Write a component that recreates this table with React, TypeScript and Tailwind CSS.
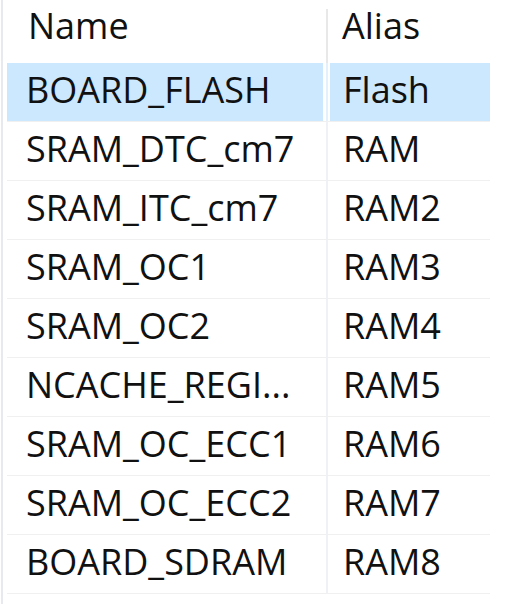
const rows = [
  { name: "BOARD_FLASH", alias: "Flash", selected: true },
  { name: "SRAM_DTC_cm7", alias: "RAM" },
  { name: "SRAM_ITC_cm7", alias: "RAM2" },
  { name: "SRAM_OC1", alias: "RAM3" },
  { name: "SRAM_OC2", alias: "RAM4" },
  { name: "NCACHE_REGI...", alias: "RAM5" },
  { name: "SRAM_OC_ECC1", alias: "RAM6" },
  { name: "SRAM_OC_ECC2", alias: "RAM7" },
  { name: "BOARD_SDRAM", alias: "RAM8" },
];

const App = () => {
  return (
    <div className="w-[508px] h-[604px] bg-white overflow-hidden flex font-['Open_Sans',sans-serif] text-[36px] font-medium text-[#111]">
      {/* left edge of the pane */}
      <div className="ml-[1px] w-[2px] h-full bg-[#e6e9ef]" />

      <div className="ml-[4px] flex flex-col">
        {/* header */}
        <div className="flex h-[63px]">
          <div className="w-[316px] pl-[21px] pt-[2px] leading-[48px]">Name</div>
          <div className="w-[7px] flex justify-center pt-[9px]">
            <div className="w-[2px] h-full bg-[#e8e8e8]" />
          </div>
          <div className="w-[160px] pl-[12px] pt-[2px] leading-[48px]">Alias</div>
        </div>

        {rows.map((row) => (
          <div key={row.name} className="flex h-[59px] border-b border-[#f0f0f0]">
            <div className={`w-[316px] pl-[19px] pb-[4px] flex items-center ${row.selected ? "bg-[#cce8ff]" : ""}`}>
              {row.name}
            </div>
            <div className="w-[7px] flex justify-center">
              <div className={`w-[2px] h-full ${row.selected ? "bg-[#e3f1fc]" : "bg-[#eef1f6]"}`} />
            </div>
            <div className={`w-[160px] pl-[13px] pb-[4px] flex items-center ${row.selected ? "bg-[#cce8ff]" : ""}`}>
              {row.alias}
            </div>
          </div>
        ))}
      </div>
    </div>
  );
};

export default App;
